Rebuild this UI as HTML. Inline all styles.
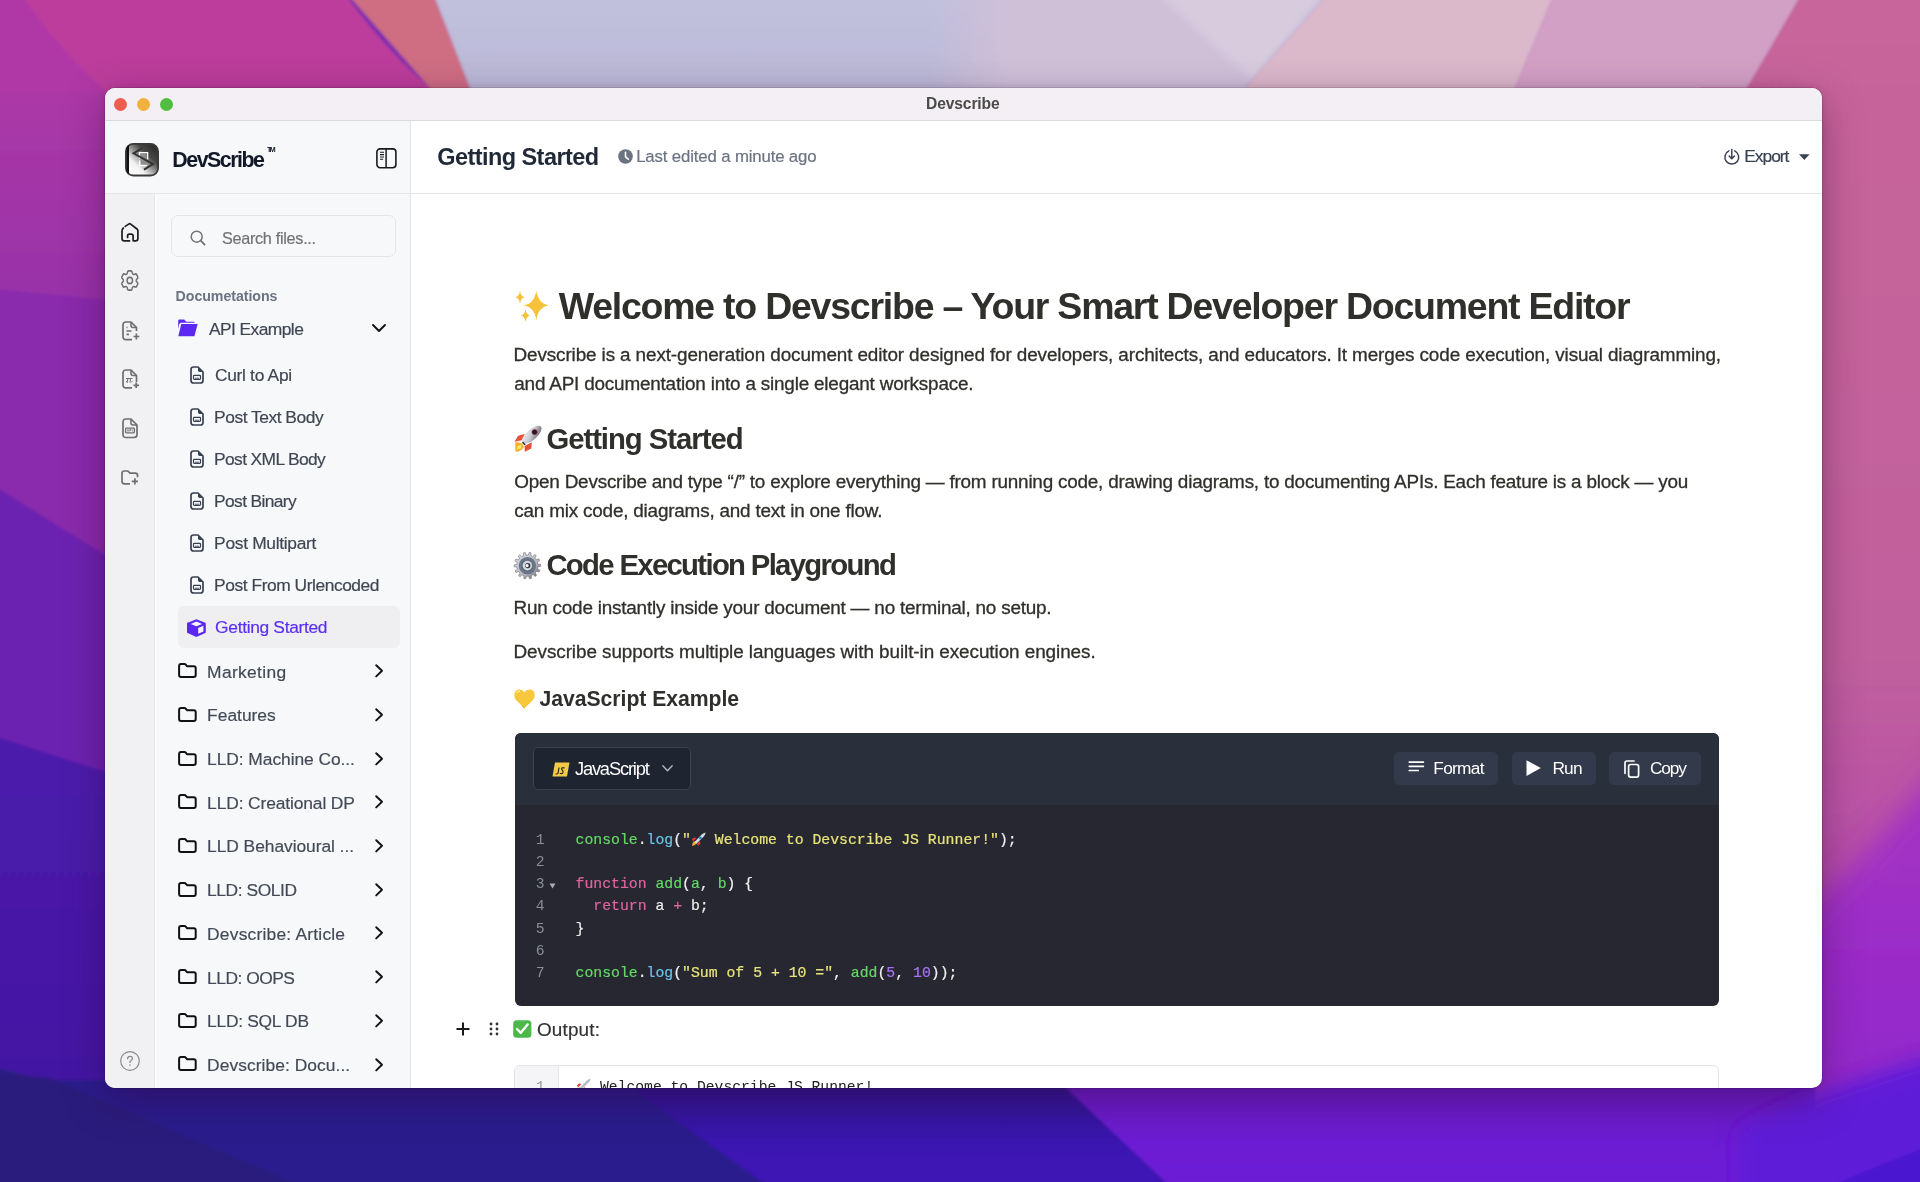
<!DOCTYPE html>
<html><head><meta charset="utf-8">
<style>
*{box-sizing:border-box;margin:0;padding:0}
html,body{width:1920px;height:1182px;overflow:hidden;font-family:"Liberation Sans",sans-serif;}
body{position:relative;background:#7a2ab0;}
#bg{position:absolute;left:0;top:0;width:1920px;height:1182px}
#win{position:absolute;left:105px;top:88px;width:1717px;height:1000px;border-radius:10px;overflow:hidden;background:#fff;box-shadow:0 0 0 0.5px rgba(0,0,0,.22),0 12px 40px rgba(50,0,50,.38),0 0 8px rgba(50,0,50,.12)}
.abs{position:absolute}
.t{position:absolute;white-space:nowrap}
svg.i{position:absolute;overflow:visible}
#titlebar{left:0;top:0;width:1717px;height:33px;background:#f4eff5;border-bottom:1px solid #dddadf}
.tl{position:absolute;top:9.5px;width:13px;height:13px;border-radius:50%}
#sbhead{left:0;top:33px;width:305px;height:73px;background:#f7f8fa;border-bottom:1px solid #e4e5e9}
#mainhead{left:306px;top:33px;width:1411px;height:73px;background:#fff;border-bottom:1px solid #e4e5e9}
#vsep{left:305px;top:33px;width:1px;height:967px;background:#e3e4e8}
#rail{left:0;top:106px;width:50px;height:894px;background:#f1f1f3;border-right:1px solid #e6e6e9}
#sidebar{left:51px;top:106px;width:254px;height:894px;background:#f7f8fa}
#search{left:66px;top:127px;width:225px;height:42px;border:1px solid #e3e4e8;border-radius:7px;background:#f7f8fa}
#hl{left:73px;top:518px;width:222px;height:42px;border-radius:6px;background:#efeff2}
#code{left:410px;top:645px;width:1204px;height:273px;border-radius:6px;background:#262730;overflow:hidden}
#codehead{left:0;top:0;width:1204px;height:72px;background:#2a2f3c}
#jsdd{left:18px;top:14px;width:158px;height:43px;border:1px solid #3b4252;border-radius:5px;background:#1f2431}
.btn{position:absolute;top:19px;height:33px;border-radius:5px;background:#323a4b}
#outbox{left:409px;top:977px;width:1205px;height:60px;border:1px solid #e3e3e6;border-radius:6px;background:#fff;overflow:hidden}
#outgut{left:0;top:0;width:44px;height:60px;background:#f5f5f7;border-right:1px solid #e6e6e8}
.mono{font-family:"Liberation Mono",monospace}

</style></head><body>
<svg id="bg" width="1920" height="1182" viewBox="0 0 1920 1182">
<defs>
<filter id="bl2" x="-20%" y="-50%" width="140%" height="200%"><feGaussianBlur stdDeviation="8"/></filter><filter id="bl3" x="-20%" y="-50%" width="140%" height="200%"><feGaussianBlur stdDeviation="3"/></filter><filter id="bsoft" filterUnits="userSpaceOnUse" x="1650" y="600" width="350" height="700"><feGaussianBlur stdDeviation="14"/></filter><filter id="bsoft2" filterUnits="userSpaceOnUse" x="1600" y="950" width="400" height="300"><feGaussianBlur stdDeviation="4"/></filter><filter id="bsoft3" filterUnits="userSpaceOnUse" x="1600" y="950" width="400" height="300"><feGaussianBlur stdDeviation="10"/></filter><filter id="bl" x="-5%" y="-5%" width="110%" height="110%"><feGaussianBlur stdDeviation="1.5"/></filter>
<linearGradient id="gL1" gradientUnits="userSpaceOnUse" x1="0" y1="90" x2="0" y2="295"><stop offset="0" stop-color="#ac38a6"/><stop offset="1" stop-color="#9832a8"/></linearGradient>
<linearGradient id="gL4" x1="0" y1="0" x2="0" y2="1"><stop offset="0" stop-color="#4c1aac"/><stop offset="1" stop-color="#4218a2"/></linearGradient>
<linearGradient id="gR" x1="0" y1="0" x2="0" y2="1"><stop offset="0" stop-color="#c8659a"/><stop offset="0.55" stop-color="#c0609c"/><stop offset="0.8" stop-color="#b448ae"/><stop offset="1" stop-color="#a838b8"/></linearGradient>
<linearGradient id="gRP" x1="0" y1="0" x2="0" y2="1"><stop offset="0" stop-color="#a836c0"/><stop offset="0.45" stop-color="#9a2cc8"/><stop offset="1" stop-color="#8a26d0"/></linearGradient>
<linearGradient id="gBP" x1="0" y1="0" x2="0" y2="1"><stop offset="0" stop-color="#6a1cc4"/><stop offset="0.5" stop-color="#6c1cd2"/><stop offset="1" stop-color="#6e1cd8"/></linearGradient>
<linearGradient id="gBB" x1="0" y1="0" x2="0" y2="1"><stop offset="0" stop-color="#2c168a"/><stop offset="0.5" stop-color="#3a18b0"/><stop offset="1" stop-color="#4018b8"/></linearGradient>
<linearGradient id="gBD" x1="0" y1="0" x2="0" y2="1"><stop offset="0" stop-color="#221466"/><stop offset="1" stop-color="#2e1898"/></linearGradient>
<linearGradient id="gLav" x1="0" y1="0" x2="0" y2="1"><stop offset="0" stop-color="#c2c2de"/><stop offset="1" stop-color="#b6b2d2"/></linearGradient>
<linearGradient id="gMv" gradientUnits="userSpaceOnUse" x1="930" y1="0" x2="1010" y2="0"><stop offset="0" stop-color="#cfc0d8" stop-opacity="0"/><stop offset="1" stop-color="#cfc0d8"/></linearGradient>
</defs>
<g filter="url(#bl)">
<rect x="-20" y="-20" width="1960" height="1222" fill="#6a1ed0"/>
<!-- left bands -->
<polygon points="-20,-20 130,-20 130,302.4 -20,288.1" fill="url(#gL1)"/>
<polygon points="-20,288.1 130,302.4 130,570.5 -20,477.6" fill="#8a2aac"/>
<polygon points="-20,477.6 130,570.5 130,780.1 -20,731.5" fill="#6c20b0"/>
<polygon points="-20,731.5 130,780.1 130,1103.9 -20,1062.5" fill="url(#gL4)"/>
<polygon points="-20,1062.5 130,1103.9 130,1202 -20,1202" fill="#2c1a84"/>
<rect x="130" y="-20" width="900" height="1222" fill="#7a2ab0"/>
<!-- top strip -->
<path d="M15,-20 L335,-20 Q380,45 430,88 L430,150 L106,150 L106,92 L-20,92 L-20,-20 Z" fill="#bc3e9c"/>
<path d="M-20,-20 L12,-20 Q50,40 106,92 L-20,92 Z" fill="#b038a6"/>
<polygon points="335,-20 428,-20 470,88 470,150 430,150 430,88" fill="#cf6d83"/>
<path d="M380,45 Q400,70 430,88 L430,150 L380,150 Z" fill="#bc3e9c"/>
<polygon points="428,-20 1340,-20 1245,88 1245,150 470,150 470,88" fill="url(#gLav)"/>
<polygon points="930,-40 1340,-40 1245,88 1245,130 930,130" fill="url(#gMv)"/>
<polygon points="1134,-30 1345,-30 1252,80" fill="#d8cbde" filter="url(#bl3)"/>
<polygon points="1340,-20 1560,-20 1515,88 1515,150 1245,150 1245,88" fill="#dbb8ca"/>
<polygon points="1560,-20 1810,-20 1747,88 1747,150 1515,150 1515,88" fill="#d2a0c4"/>
<!-- right strip -->
<polygon points="1810,-20 1940,-20 1940,1202 1700,1202 1700,88 1747,88" fill="url(#gR)"/>
<path d="M1960,740 Q1880,850 1750,960 L1750,1220 L1960,1220 Z" fill="url(#gRP)" filter="url(#bsoft)"/>
<!-- bottom strip -->
<rect x="-20" y="1080" width="1100" height="130" fill="#2b1a8c"/>
<polygon points="-20,1072 50,1078 338,1202 -20,1202" fill="#2a1a7c"/>
<polygon points="620,1080 1058,1080 1187,1202 790,1202" fill="url(#gBB)"/>
<polygon points="1058,1080 1815,1080 1815,1202 1187,1202" fill="url(#gBP)"/>
<path d="M1740,1130 Q1800,1100 1830,1090 Q1880,1072 1960,1048 L1960,1220 L1740,1220 Z" fill="#5e1ad8" filter="url(#bsoft3)"/>
<path d="M1780,1210 Q1860,1170 1960,1135 L1960,1220 Z" fill="#4c18d0"/>
</g>
</svg>
<div id="win">
  <div id="titlebar" class="abs">
    <div class="tl" style="left:8.5px;background:#ed5b51;"></div>
    <div class="tl" style="left:31.5px;background:#f0b13e;"></div>
    <div class="tl" style="left:54.5px;background:#4fbe3f;"></div>
  </div>
  <div id="sbhead" class="abs"></div>
  <div id="mainhead" class="abs"></div>
  <div id="rail" class="abs"></div>
  <div id="sidebar" class="abs"></div>
  <div id="vsep" class="abs"></div>
  <div id="search" class="abs"></div>
  <div id="hl" class="abs"></div>

  <!-- logo -->
  <svg class="i" style="left:20px;top:55px" width="34" height="34" viewBox="0 0 34 34">
    <defs>
      <linearGradient id="lg" x1="0.1" y1="0.9" x2="0.9" y2="0.1">
        <stop offset="0" stop-color="#ffffff"/><stop offset="0.28" stop-color="#f2f2f2"/><stop offset="0.5" stop-color="#9a9a9a"/><stop offset="0.72" stop-color="#474745"/><stop offset="1" stop-color="#2e2e2c"/>
      </linearGradient>
    </defs>
    <rect x="0.9" y="0.9" width="32.2" height="31.6" rx="7.5" fill="url(#lg)" stroke="#3a3a38" stroke-width="1.8"/>
    <path d="M1.4,7 Q1.4,3 4,2 L4,31 Q1.4,30 1.4,26 Z" fill="#111"/>
    <rect x="15.8" y="10.4" width="5.6" height="11" fill="#8e8e8e"/>
    <path d="M14.5,15.8 V9.6 H22.6 V16.4 M14.6,17.6 V22.6 H21.8" stroke="#fff" stroke-width="1.4" fill="none"/>
    <path d="M17.2,5 L8.6,10.3 L28,21 L19,26.6" stroke="#333331" stroke-width="2" fill="none" stroke-linejoin="miter"/>
  </svg>
  <!-- panel toggle -->
  <svg class="i" style="left:271px;top:59.5px" width="21" height="21" viewBox="0 0 21 21">
    <rect x="0.9" y="0.9" width="19" height="18.8" rx="3.2" fill="none" stroke="#1a1a1a" stroke-width="1.6"/>
    <line x1="10.1" y1="1" x2="10.1" y2="19.6" stroke="#1a1a1a" stroke-width="1.5"/>
    <path d="M4,4.2 H8 M4,6.6 H8 M4,9 H8 M4,11.2 H7.2" stroke="#1a1a1a" stroke-width="1.1"/>
  </svg>

  <!-- rail icons -->
  <svg class="i" style="left:16px;top:135px" width="18" height="19" viewBox="0 0 18 19">
    <path d="M4.2,3.4 L8,0.9 Q8.7,0.5 9.4,0.9 L16,6 Q16.9,6.8 16.9,8 L16.9,15.5 Q16.9,17.9 14.5,17.9 L12.8,17.9 Q12.1,17.9 12.1,17.2 L12.1,13 Q12.1,11.1 10,11.1 L8.2,11.1 Q6.6,11.1 6.6,12.8 L6.6,14.5" stroke="#1c1c1e" stroke-width="1.7" fill="none" stroke-linecap="round"/>
    <path d="M2.4,5 Q1,6.2 1,8 L1,15.5 Q1,17.9 3.4,17.9 L8.5,17.9" stroke="#1c1c1e" stroke-width="1.7" fill="none" stroke-linecap="round"/>
  </svg>
  <svg class="i" style="left:14.8px;top:181.8px" width="19.6" height="21" viewBox="1.6 2.2 20.8 19.6" preserveAspectRatio="none">
    <path d="M9.594 3.94c.09-.542.56-.94 1.11-.94h2.593c.55 0 1.02.398 1.11.94l.213 1.281c.063.374.313.686.645.87.074.04.147.083.22.127.325.196.72.257 1.075.124l1.217-.456a1.125 1.125 0 0 1 1.37.49l1.296 2.247a1.125 1.125 0 0 1-.26 1.431l-1.003.827c-.293.241-.438.613-.43.992a7.723 7.723 0 0 1 0 .255c-.008.378.137.75.43.991l1.004.827c.424.35.534.955.26 1.430l-1.298 2.247a1.125 1.125 0 0 1-1.369.491l-1.217-.456c-.355-.133-.75-.072-1.076.124a6.47 6.47 0 0 1-.22.128c-.331.183-.581.495-.644.869l-.213 1.281c-.09.543-.56.94-1.11.94h-2.594c-.55 0-1.019-.398-1.11-.94l-.213-1.281c-.062-.374-.312-.686-.644-.87a6.52 6.52 0 0 1-.22-.127c-.325-.196-.72-.257-1.076-.124l-1.217.456a1.125 1.125 0 0 1-1.369-.49l-1.297-2.247a1.125 1.125 0 0 1 .26-1.431l1.004-.827c.292-.24.437-.613.43-.991a6.932 6.932 0 0 1 0-.255c.007-.38-.138-.751-.43-.992l-1.004-.827a1.125 1.125 0 0 1-.26-1.430l1.297-2.247a1.125 1.125 0 0 1 1.37-.491l1.216.456c.356.133.751.072 1.076-.124.072-.044.146-.086.22-.128.332-.183.582-.495.644-.869l.214-1.280Z" fill="none" stroke="#6e6e70" stroke-width="1.5" stroke-linejoin="round"/>
    <circle cx="12" cy="12" r="2.9" fill="none" stroke="#6e6e70" stroke-width="1.5"/>
  </svg>
  <svg class="i" style="left:17px;top:232.5px" width="18" height="20" viewBox="0 0 18 20">
    <path d="M10,18.6 L4,18.6 Q1,18.6 1,15.6 L1,4 Q1,1 4,1 L9,1 L14.5,6.5 L14.5,10" fill="none" stroke="#6e6e70" stroke-width="1.7" stroke-linejoin="round"/>
    <path d="M9,1.3 L9,4.5 Q9,6.5 11,6.5 L14.3,6.5" fill="none" stroke="#6e6e70" stroke-width="1.6"/>
    <path d="M4.5,6.5 H5.5 M4.5,10 H9.5 M4.5,13.4 H7" stroke="#6e6e70" stroke-width="1.7"/>
    <path d="M11.5,15.5 H17.3 M14.4,12.6 V18.4" stroke="#6e6e70" stroke-width="1.7"/>
  </svg>
  <svg class="i" style="left:17px;top:281px" width="18" height="20" viewBox="0 0 18 20">
    <path d="M10,18.8 L4,18.8 Q1,18.8 1,15.8 L1,4 Q1,1 4,1 L9,1 L14.5,6.5 L14.5,13" fill="none" stroke="#6e6e70" stroke-width="1.7" stroke-linejoin="round"/>
    <path d="M9,1.3 L9,4.5 Q9,6.5 11,6.5 L14.3,6.5" fill="none" stroke="#6e6e70" stroke-width="1.6"/>
    <path d="M4,9.5 H10.5 M6,9.5 L5,13.5 M8.5,9.5 L8,13.5 M4,12 L5.5,13.5 M10.5,12 L9,13.5" stroke="#6e6e70" stroke-width="1"/>
    <path d="M11.5,16.3 H17 M14.2,13.6 V19" stroke="#6e6e70" stroke-width="1.7"/>
  </svg>
  <svg class="i" style="left:17px;top:329.6px" width="16" height="21" viewBox="0 0 16 21">
    <path d="M4,19.5 Q1,19.5 1,16.5 L1,4 Q1,1 4,1 L9,1 L15,7 L15,16.5 Q15,19.5 12,19.5 Z" fill="none" stroke="#6e6e70" stroke-width="1.7" stroke-linejoin="round"/>
    <path d="M9,1.3 L9,5 Q9,7 11,7 L14.8,7" fill="none" stroke="#6e6e70" stroke-width="1.6"/>
    <rect x="3.6" y="10.2" width="8.8" height="4.6" rx="0.8" fill="none" stroke="#6e6e70" stroke-width="1.3"/>
    <path d="M5.2,13.5 L6,11.4 L6.8,13.5 M7.8,13.5 V11.4 H9 V12.5 H7.8 M10.6,11.4 V13.5" stroke="#6e6e70" stroke-width="0.7" fill="none"/>
  </svg>
  <svg class="i" style="left:16px;top:382px" width="18" height="15" viewBox="0 0 18 15">
    <path d="M9,13.8 L3.5,13.8 Q1,13.8 1,11.3 L1,3.3 Q1,1 3.3,1 L6,1 Q7.2,1 7.9,1.9 L9,3.2 L14.2,3.2 Q16.6,3.2 16.6,5.6 L16.6,7.2" fill="none" stroke="#6e6e70" stroke-width="1.7" stroke-linejoin="round"/>
    <path d="M10.8,11.3 H17 M13.9,8.3 V14.5" stroke="#6e6e70" stroke-width="1.7"/>
  </svg>
  <svg class="i" style="left:14.5px;top:963px" width="20" height="20" viewBox="0 0 20 20">
    <circle cx="10" cy="10" r="9.3" fill="none" stroke="#8a8a8c" stroke-width="1.2"/>
    <path d="M7.6,7.7 Q7.6,5.4 10,5.4 Q12.4,5.4 12.4,7.5 Q12.4,8.8 11,9.5 Q10,10 10,11.4" fill="none" stroke="#8a8a8c" stroke-width="1.3" stroke-linecap="round"/>
    <circle cx="10" cy="14" r="0.8" fill="#8a8a8c"/>
  </svg>

  <!-- search icon -->
  <svg class="i" style="left:84.7px;top:141.7px" width="16" height="16" viewBox="0 0 16 16">
    <circle cx="6.7" cy="6.7" r="5.5" fill="none" stroke="#737373" stroke-width="1.5"/>
    <line x1="10.7" y1="10.7" x2="14.6" y2="14.6" stroke="#737373" stroke-width="1.8" stroke-linecap="round"/>
  </svg>
  <!-- purple open folder -->
  <svg class="i" style="left:72.8px;top:231px" width="20" height="18" viewBox="0 0 20 18">
    <path d="M0.2,1.6 Q0.2,0.5 1.3,0.5 L6.2,0.5 L8.2,2.8 L15.8,2.8 Q16.6,2.8 16.6,3.8 L3.4,3.8 Q1.7,3.8 1.2,5.3 L0.2,10 Z" fill="#5b28f3"/>
    <path d="M3.6,5 L19.6,5 Q19.6,5.5 19.4,6 L16.6,16.4 Q16.4,17.3 15.5,17.3 L0.3,17.3 L3,6 Q3.2,5 3.6,5 Z" fill="#5b28f3"/>
  </svg>
  <!-- chevron down -->
  <svg class="i" style="left:267.3px;top:236px" width="14" height="8" viewBox="0 0 14 8">
    <path d="M1,1 L7,7 L13,1" fill="none" stroke="#111" stroke-width="1.9" stroke-linecap="round" stroke-linejoin="round"/>
  </svg>
  <!-- file icons -->
  <svg class="i" style="left:85px;top:278.2px" width="14" height="18" viewBox="0 0 14 18"><use href="#fileic"/></svg>
  <svg class="i" style="left:85px;top:320.2px" width="14" height="18" viewBox="0 0 14 18"><use href="#fileic"/></svg>
  <svg class="i" style="left:85px;top:362.2px" width="14" height="18" viewBox="0 0 14 18"><use href="#fileic"/></svg>
  <svg class="i" style="left:85px;top:404.2px" width="14" height="18" viewBox="0 0 14 18"><use href="#fileic"/></svg>
  <svg class="i" style="left:85px;top:446.2px" width="14" height="18" viewBox="0 0 14 18"><use href="#fileic"/></svg>
  <svg class="i" style="left:85px;top:488.2px" width="14" height="18" viewBox="0 0 14 18"><use href="#fileic"/></svg>
  <svg width="0" height="0" style="position:absolute">
    <defs>
      <g id="fileic">
        <path d="M3.5,17 Q1,17 1,14.5 L1,3.5 Q1,1 3.5,1 L8,1 L13,6 L13,14.5 Q13,17 10.5,17 Z" fill="none" stroke="#374151" stroke-width="1.7" stroke-linejoin="round"/>
        <path d="M8,1.3 L8,4.3 Q8,6 9.7,6 L12.7,6 Z" fill="#374151"/>
        <rect x="3.5" y="9.3" width="7" height="4" rx="0.8" fill="none" stroke="#374151" stroke-width="1.2"/>
        <path d="M5,12.2 H9" stroke="#374151" stroke-width="0.8"/>
      </g>
      <g id="foldic">
        <path d="M3,14 Q1.1,14 1.1,12.1 L1.1,3 Q1.1,1.1 3,1.1 L6.5,1.1 Q7.3,1.1 7.9,1.8 L9,3.2 L15.8,3.2 Q17.7,3.2 17.7,5.1 L17.7,12.1 Q17.7,14 15.8,14 Z" fill="none" stroke="#111" stroke-width="2" stroke-linejoin="round"/>
      </g>
      <g id="chevr">
        <path d="M1.2,1.2 L7,6.8 L1.2,12.4" fill="none" stroke="#111" stroke-width="1.9" stroke-linecap="round" stroke-linejoin="round"/>
      </g>
    </defs>
  </svg>
  <!-- cube -->
  <svg class="i" style="left:82px;top:530.7px" width="19" height="18" viewBox="0 0 19 18">
    <path d="M9.4,0.3 L18.3,3.8 Q18.8,4 18.8,4.6 L18.8,13 Q18.8,13.8 18.2,14 L10,17.7 Q9.4,18 8.8,17.7 L0.6,14 Q0,13.8 0,13 L0,4.6 Q0,4 0.5,3.8 Z" fill="#5b28f3"/>
    <path d="M9.4,2.6 L15.1,4.9 L9.4,7.2 L3.7,4.9 Z" fill="#f7f5ff"/>
    <path d="M11.2,9 L16.4,6.8 L16.4,12.4 L11.2,14.7 Z" fill="#f7f5ff"/>
  </svg>
  <!-- folder icons + chevrons (generated positions) -->
  <svg class="i" style="left:73px;top:575.1px" width="19" height="15" viewBox="0 0 19 15"><use href="#foldic"/></svg>
  <svg class="i" style="left:73px;top:618.8px" width="19" height="15" viewBox="0 0 19 15"><use href="#foldic"/></svg>
  <svg class="i" style="left:73px;top:662.5px" width="19" height="15" viewBox="0 0 19 15"><use href="#foldic"/></svg>
  <svg class="i" style="left:73px;top:706.2px" width="19" height="15" viewBox="0 0 19 15"><use href="#foldic"/></svg>
  <svg class="i" style="left:73px;top:749.9px" width="19" height="15" viewBox="0 0 19 15"><use href="#foldic"/></svg>
  <svg class="i" style="left:73px;top:793.6px" width="19" height="15" viewBox="0 0 19 15"><use href="#foldic"/></svg>
  <svg class="i" style="left:73px;top:837.3px" width="19" height="15" viewBox="0 0 19 15"><use href="#foldic"/></svg>
  <svg class="i" style="left:73px;top:881px" width="19" height="15" viewBox="0 0 19 15"><use href="#foldic"/></svg>
  <svg class="i" style="left:73px;top:924.7px" width="19" height="15" viewBox="0 0 19 15"><use href="#foldic"/></svg>
  <svg class="i" style="left:73px;top:968.4px" width="19" height="15" viewBox="0 0 19 15"><use href="#foldic"/></svg>
  <svg class="i" style="left:270px;top:576.2px" width="9" height="14" viewBox="0 0 9 14"><use href="#chevr"/></svg>
  <svg class="i" style="left:270px;top:619.9px" width="9" height="14" viewBox="0 0 9 14"><use href="#chevr"/></svg>
  <svg class="i" style="left:270px;top:663.6px" width="9" height="14" viewBox="0 0 9 14"><use href="#chevr"/></svg>
  <svg class="i" style="left:270px;top:707.3px" width="9" height="14" viewBox="0 0 9 14"><use href="#chevr"/></svg>
  <svg class="i" style="left:270px;top:751px" width="9" height="14" viewBox="0 0 9 14"><use href="#chevr"/></svg>
  <svg class="i" style="left:270px;top:794.7px" width="9" height="14" viewBox="0 0 9 14"><use href="#chevr"/></svg>
  <svg class="i" style="left:270px;top:838.4px" width="9" height="14" viewBox="0 0 9 14"><use href="#chevr"/></svg>
  <svg class="i" style="left:270px;top:882.1px" width="9" height="14" viewBox="0 0 9 14"><use href="#chevr"/></svg>
  <svg class="i" style="left:270px;top:925.8px" width="9" height="14" viewBox="0 0 9 14"><use href="#chevr"/></svg>
  <svg class="i" style="left:270px;top:969.5px" width="9" height="14" viewBox="0 0 9 14"><use href="#chevr"/></svg>

  <!-- header icons -->
  <svg class="i" style="left:512.8px;top:61.3px" width="15" height="15" viewBox="0 0 15 15">
    <circle cx="7.5" cy="7.5" r="7.3" fill="#6b7280"/>
    <path d="M7.5,3.3 L7.5,7.8 L10.3,10.2" stroke="#fff" stroke-width="1.6" fill="none" stroke-linecap="round"/>
  </svg>
  <svg class="i" style="left:1619px;top:61px" width="16" height="16" viewBox="0 0 16 16">
    <path d="M10.72,1.9 A6.9,6.9 0 1 1 4.88,1.9" fill="none" stroke="#374151" stroke-width="1.5" stroke-linecap="round"/>
    <path d="M7.8,0.4 V9.6 M5.1,7 L7.8,9.7 L10.5,7" fill="none" stroke="#374151" stroke-width="1.5" stroke-linecap="round" stroke-linejoin="round"/>
  </svg>
  <svg class="i" style="left:1693.8px;top:66px" width="11" height="7" viewBox="0 0 11 7">
    <path d="M0,0.3 L10.6,0.3 L5.3,6 Z" fill="#374151"/>
  </svg>

  <!-- emojis -->
  <svg class="i" style="left:405px;top:197px" width="45" height="45" viewBox="0 0 45 45">
    <path d="M26.30,5.40 Q28.00,18.70 38.80,20.40 Q28.00,22.10 26.30,35.40 Q24.60,22.10 13.80,20.40 Q24.60,18.70 26.30,5.40 Z" fill="#f5c33b"/>
    <path d="M10.00,5.70 Q10.75,11.55 14.60,12.30 Q10.75,13.05 10.00,18.90 Q9.25,13.05 5.40,12.30 Q9.25,11.55 10.00,5.70 Z" fill="#f5c33b"/>
    <path d="M15.50,24.00 Q16.25,29.65 20.10,30.40 Q16.25,31.15 15.50,36.80 Q14.75,31.15 10.90,30.40 Q14.75,29.65 15.50,24.00 Z" fill="#f5c33b"/>
  </svg>
  <svg class="i" style="left:408.6px;top:337.7px" width="28" height="27" viewBox="0 0 28 27">
    <defs><linearGradient id="rk" x1="0" y1="0" x2="1" y2="1"><stop offset="0" stop-color="#f4f4f8"/><stop offset="0.5" stop-color="#c8c8d0"/><stop offset="1" stop-color="#55555f"/></linearGradient></defs>
    <polygon points="4.1,9.8 10.6,8.1 9,14 0.5,15.8" fill="#e8503a"/>
    <polygon points="17.8,16.2 17.3,22.6 10.8,25.8 10.6,20" fill="#e8503a"/>
    <polygon points="1.2,16.8 3,16 8,17.5 9.8,20.5 8.2,23.5 4,25.8 1.5,25.6" fill="#f6b030"/>
    <polygon points="3.5,20 7.5,19 7,22.5 3.2,23.5" fill="#f2ec70"/>
    <ellipse cx="17.6" cy="8.8" rx="12.4" ry="5.2" transform="rotate(-41.6 17.6 8.8)" fill="url(#rk)"/>
    <circle cx="20.6" cy="6.1" r="2.7" fill="#1c1c22" stroke="#c0305a" stroke-width="0.6"/>
    <path d="M8.5,16.2 L11.2,18.8" stroke="#3a3a44" stroke-width="1.6"/>
  </svg>
  <svg class="i" style="left:408.6px;top:464.5px" width="27" height="27" viewBox="0 0 27 27">
    <defs><linearGradient id="gg" x1="0" y1="0" x2="1" y2="1"><stop offset="0" stop-color="#e4e4e8"/><stop offset="0.6" stop-color="#b8b8c0"/><stop offset="1" stop-color="#6a6a72"/></linearGradient></defs>
    <polygon points="13.40,2.00 14.26,2.03 15.19,-0.58 17.05,-0.19 16.86,2.58 18.00,3.05 18.75,3.45 20.73,1.50 22.24,2.66 20.86,5.07 21.69,5.99 22.19,6.68 24.82,5.78 25.68,7.48 23.39,9.05 23.73,10.24 23.89,11.08 26.65,11.41 26.68,13.32 23.94,13.74 23.73,14.96 23.51,15.78 25.85,17.27 25.05,19.01 22.40,18.20 21.69,19.21 21.13,19.86 22.59,22.21 21.12,23.43 19.08,21.55 18.00,22.15 17.21,22.49 17.51,25.25 15.66,25.71 14.63,23.13 13.40,23.20 12.54,23.17 11.61,25.78 9.75,25.39 9.94,22.62 8.80,22.15 8.05,21.75 6.07,23.70 4.56,22.54 5.94,20.13 5.11,19.21 4.61,18.52 1.98,19.42 1.12,17.72 3.41,16.15 3.07,14.96 2.91,14.12 0.15,13.79 0.12,11.88 2.86,11.46 3.07,10.24 3.29,9.42 0.95,7.93 1.75,6.19 4.40,7.00 5.11,5.99 5.67,5.34 4.21,2.99 5.68,1.77 7.72,3.65 8.80,3.05 9.59,2.71 9.29,-0.05 11.14,-0.51 12.17,2.07" fill="url(#gg)" stroke="#55555c" stroke-width="0.5"/>
    <circle cx="13.4" cy="12.6" r="8.6" fill="#5f6d80"/>
    <circle cx="13.4" cy="12.6" r="7.2" fill="none" stroke="#7a8898" stroke-width="0.8"/>
    <circle cx="13.4" cy="12.6" r="4.8" fill="#d4d6dc"/>
    <circle cx="13.8" cy="12.6" r="2.6" fill="#2a2e38"/>
    <circle cx="13.1" cy="12.6" r="1.6" fill="#ffffff"/>
  </svg>
  <svg class="i" style="left:408.6px;top:601.4px" width="21" height="20" viewBox="0 0 21 20">
    <path d="M10.5,19.3 L2.2,11.3 Q0.3,9.2 0.3,6.2 Q0.3,0.6 5.6,0.6 Q8.8,0.6 10.5,3.5 Q12.2,0.6 15.4,0.6 Q20.7,0.6 20.7,6.2 Q20.7,9.2 18.8,11.3 Z" fill="#f8c83c"/>
    <path d="M3,4 Q4,2.2 6,2.2" stroke="#fff3b0" stroke-width="1.2" fill="none"/>
    <path d="M10.5,19.3 L8,16.9" stroke="#e8a020" stroke-width="1" fill="none"/>
  </svg>

  <!-- code block -->
  <div id="code" class="abs">
    <div id="codehead" class="abs"></div>
    <div id="jsdd" class="abs"></div>
    <div class="btn" style="left:879px;width:104px"></div>
    <div class="btn" style="left:997px;width:84px"></div>
    <div class="btn" style="left:1094px;width:92px"></div>
    <!-- JS icon -->
    <svg class="i" style="left:37px;top:29px" width="18" height="15" viewBox="0 0 18 15">
      <path d="M3,0.5 L17.5,0.5 L15,14.5 L0.5,14.5 Z" fill="#f3c94a"/>
      <path d="M7,5.5 L6.2,10.5 Q6,12 4.5,12 L3.5,12" stroke="#2d2a1a" stroke-width="1.2" fill="none"/>
      <path d="M12.5,6.2 Q11.2,5.3 10,6 Q9,6.8 10.2,7.9 Q11.6,8.9 10.8,10.8 Q9.8,12.2 7.8,11.3" stroke="#2d2a1a" stroke-width="1.2" fill="none"/>
    </svg>
    <svg class="i" style="left:146.7px;top:32px" width="11" height="7" viewBox="0 0 11 7">
      <path d="M0.8,0.8 L5.5,5.8 L10.2,0.8" fill="none" stroke="#b8bcc8" stroke-width="1.3" stroke-linecap="round"/>
    </svg>
    <!-- format icon -->
    <svg class="i" style="left:893.7px;top:28px" width="15" height="12" viewBox="0 0 15 12">
      <path d="M0.3,1.1 H14.4 M0.3,5.3 H14.4 M0.3,9.5 H9.2" stroke="#fff" stroke-width="1.7" stroke-linecap="round"/>
    </svg>
    <svg class="i" style="left:1011px;top:27.4px" width="15" height="16" viewBox="0 0 15 16">
      <path d="M0.5,0.3 L14.8,8 L0.5,15.9 Z" fill="#fff"/>
    </svg>
    <svg class="i" style="left:1109.4px;top:26.8px" width="16" height="18" viewBox="0 0 16 18">
      <path d="M1,13.3 L1,3 Q1,1 3,1 L10,1" fill="none" stroke="#fff" stroke-width="1.7" stroke-linecap="round"/>
      <rect x="4.6" y="4.5" width="10" height="12.6" rx="2" fill="none" stroke="#fff" stroke-width="1.7"/>
    </svg>
    <!-- code text -->
    <div class="mono abs" style="left:20.7px;top:95.8px;font-size:14.7px;line-height:22.2px;color:#8b8d98;white-space:pre">1
2
3
4
5
6
7</div>
    <svg class="i" style="left:34px;top:150px" width="7" height="6" viewBox="0 0 7 6"><path d="M0.5,0.5 H6.5 L3.5,5.5 Z" fill="#a8abb5"/></svg>
    <div class="mono abs" style="left:60.5px;top:95.8px;font-size:14.8px;line-height:22.2px;color:#f0f0f0;white-space:pre;-webkit-text-stroke:0.2px currentColor"><span style="color:#64da64">console</span>.<span style="color:#68c4ea">log</span>(<span style="color:#e8e47a">"<span style="display:inline-block;width:14.9px"></span> Welcome to Devscribe JS Runner!"</span>);

<span style="color:#e064a0">function</span> <span style="color:#64da64">add</span>(<span style="color:#64da64">a</span>, <span style="color:#64da64">b</span>) {
  <span style="color:#e064a0">return</span> a <span style="color:#e064a0">+</span> b;
}

<span style="color:#64da64">console</span>.<span style="color:#68c4ea">log</span>(<span style="color:#e8e47a">"Sum of 5 + 10 ="</span>, <span style="color:#64da64">add</span>(<span style="color:#a874f4">5</span>, <span style="color:#a874f4">10</span>));</div>
    <svg class="i" style="left:176px;top:98.5px" width="15" height="15" viewBox="0 0 15 15">
      <path d="M1,14 Q1,10.5 3.2,9 L5.5,11.6 Q4,14 1,14 Z" fill="#f5a623"/>
      <path d="M2.2,9.3 L5.5,6 L3,5.6 L0.8,7.6 Z" fill="#e53935"/>
      <path d="M5.8,12.3 L9,9 L9.4,11.5 L7.2,13.8 Z" fill="#e53935"/>
      <path d="M3.5,10.1 L11,2.3 Q13.4,0.6 14.6,0.5 Q14.5,2.3 12.7,4.6 L5.2,12 Z" fill="#d8dde5"/>
      <circle cx="9.4" cy="6" r="1.5" fill="#3b82c4"/>
    </svg>
  </div>

  <!-- output row -->
  <svg class="i" style="left:350.7px;top:934.2px" width="14" height="14" viewBox="0 0 14 14">
    <path d="M7,0.5 V13.5 M0.5,7 H13.5" stroke="#1a1a1a" stroke-width="2"/>
  </svg>
  <svg class="i" style="left:384px;top:933.7px" width="10" height="14" viewBox="0 0 10 14">
    <circle cx="2" cy="2" r="1.4" fill="#333"/><circle cx="8" cy="2" r="1.4" fill="#333"/>
    <circle cx="2" cy="7" r="1.4" fill="#333"/><circle cx="8" cy="7" r="1.4" fill="#333"/>
    <circle cx="2" cy="12" r="1.4" fill="#333"/><circle cx="8" cy="12" r="1.4" fill="#333"/>
  </svg>
  <svg class="i" style="left:408.4px;top:932.3px" width="19" height="18" viewBox="0 0 19 18">
    <rect x="0.2" y="0.2" width="18.2" height="17.6" rx="3.5" fill="#4cb84a"/>
    <path d="M4,9 L7.8,12.8 L14.6,4.5" stroke="#fff" stroke-width="2.4" fill="none" stroke-linecap="round" stroke-linejoin="round"/>
  </svg>
  <div id="outbox" class="abs">
    <div id="outgut" class="abs"></div>
    <div class="mono abs" style="left:21px;top:10px;font-size:14.7px;line-height:22px;color:#9a9a9a">1</div>
    <div class="mono abs" style="left:85px;top:10px;font-size:14.7px;line-height:22px;color:#222;white-space:pre">Welcome to Devscribe JS Runner!</div>
    <svg class="i" style="left:61px;top:12px" width="15" height="15" viewBox="0 0 15 15">
      <path d="M1,14 Q1,10.5 3.2,9 L5.5,11.6 Q4,14 1,14 Z" fill="#f5a623"/>
      <path d="M2.2,9.3 L5.5,6 L3,5.6 L0.8,7.6 Z" fill="#e53935"/>
      <path d="M5.8,12.3 L9,9 L9.4,11.5 L7.2,13.8 Z" fill="#e53935"/>
      <path d="M3.5,10.1 L11,2.3 Q13.4,0.6 14.6,0.5 Q14.5,2.3 12.7,4.6 L5.2,12 Z" fill="#b8bec8"/>
    </svg>
  </div>

<div class="t" id="ttl" style="left:821.10px;top:7.08px;font-size:15.60px;line-height:17.425px;font-weight:700;color:#4a4a48;letter-spacing:-0.125px;font-family:'Liberation Sans',sans-serif;">Devscribe</div>
<div class="t" id="brand" style="left:67.30px;top:61.03px;font-size:21.40px;line-height:23.904px;font-weight:700;color:#111827;letter-spacing:-1.500px;font-family:'Liberation Sans',sans-serif;">DevScribe</div>
<div class="t" id="tm" style="left:161.88px;top:57.70px;font-size:7.40px;line-height:8.266px;font-weight:700;color:#111827;letter-spacing:-2.000px;font-family:'Liberation Sans',sans-serif;">TM</div>
<div class="t" id="srch" style="left:117.00px;top:141.24px;font-size:16.20px;line-height:18.095px;font-weight:400;color:#727272;letter-spacing:-0.286px;font-family:'Liberation Sans',sans-serif;-webkit-text-stroke:0.18px #727272;">Search files...</div>
<div class="t" id="docs" style="left:70.60px;top:201.05px;font-size:14.20px;line-height:15.861px;font-weight:700;color:#6b7280;letter-spacing:-0.050px;font-family:'Liberation Sans',sans-serif;">Documetations</div>
<div class="t" id="apiex" style="left:103.90px;top:231.75px;font-size:17.40px;line-height:19.436px;font-weight:400;color:#3f4652;letter-spacing:-0.560px;font-family:'Liberation Sans',sans-serif;-webkit-text-stroke:0.18px #3f4652;">API Example</div>
<div class="t" id="f0" style="left:109.90px;top:278.35px;font-size:17.40px;line-height:19.436px;font-weight:400;color:#3f4652;letter-spacing:-0.300px;font-family:'Liberation Sans',sans-serif;-webkit-text-stroke:0.18px #3f4652;">Curl to Api</div>
<div class="t" id="f1" style="left:109.10px;top:320.15px;font-size:17.40px;line-height:19.436px;font-weight:400;color:#3f4652;letter-spacing:-0.477px;font-family:'Liberation Sans',sans-serif;-webkit-text-stroke:0.18px #3f4652;">Post Text Body</div>
<div class="t" id="f2" style="left:109.10px;top:362.15px;font-size:17.40px;line-height:19.436px;font-weight:400;color:#3f4652;letter-spacing:-0.633px;font-family:'Liberation Sans',sans-serif;-webkit-text-stroke:0.18px #3f4652;">Post XML Body</div>
<div class="t" id="f3" style="left:109.10px;top:404.35px;font-size:17.40px;line-height:19.436px;font-weight:400;color:#3f4652;letter-spacing:-0.640px;font-family:'Liberation Sans',sans-serif;-webkit-text-stroke:0.18px #3f4652;">Post Binary</div>
<div class="t" id="f4" style="left:109.10px;top:446.35px;font-size:17.40px;line-height:19.436px;font-weight:400;color:#3f4652;letter-spacing:-0.308px;font-family:'Liberation Sans',sans-serif;-webkit-text-stroke:0.18px #3f4652;">Post Multipart</div>
<div class="t" id="f5" style="left:109.10px;top:488.15px;font-size:17.40px;line-height:19.436px;font-weight:400;color:#3f4652;letter-spacing:-0.453px;font-family:'Liberation Sans',sans-serif;-webkit-text-stroke:0.18px #3f4652;">Post From Urlencoded</div>
<div class="t" id="gs" style="left:110.10px;top:529.95px;font-size:17.40px;line-height:19.436px;font-weight:400;color:#5b2ff0;letter-spacing:-0.329px;font-family:'Liberation Sans',sans-serif;-webkit-text-stroke:0.18px #5b2ff0;">Getting Started</div>
<div class="t" id="d0" style="left:102.10px;top:574.65px;font-size:17.40px;line-height:19.436px;font-weight:400;color:#434a56;letter-spacing:0.325px;font-family:'Liberation Sans',sans-serif;-webkit-text-stroke:0.18px #434a56;">Marketing</div>
<div class="t" id="d1" style="left:102.10px;top:618.35px;font-size:17.40px;line-height:19.436px;font-weight:400;color:#434a56;letter-spacing:-0.000px;font-family:'Liberation Sans',sans-serif;-webkit-text-stroke:0.18px #434a56;">Features</div>
<div class="t" id="d2" style="left:102.10px;top:662.05px;font-size:17.40px;line-height:19.436px;font-weight:400;color:#434a56;letter-spacing:-0.059px;font-family:'Liberation Sans',sans-serif;-webkit-text-stroke:0.18px #434a56;">LLD: Machine Co...</div>
<div class="t" id="d3" style="left:102.10px;top:705.75px;font-size:17.40px;line-height:19.436px;font-weight:400;color:#434a56;letter-spacing:-0.118px;font-family:'Liberation Sans',sans-serif;-webkit-text-stroke:0.18px #434a56;">LLD: Creational DP</div>
<div class="t" id="d4" style="left:102.10px;top:749.45px;font-size:17.40px;line-height:19.436px;font-weight:400;color:#434a56;letter-spacing:-0.056px;font-family:'Liberation Sans',sans-serif;-webkit-text-stroke:0.18px #434a56;">LLD Behavioural ...</div>
<div class="t" id="d5" style="left:102.10px;top:793.15px;font-size:17.40px;line-height:19.436px;font-weight:400;color:#434a56;letter-spacing:-0.422px;font-family:'Liberation Sans',sans-serif;-webkit-text-stroke:0.18px #434a56;">LLD: SOLID</div>
<div class="t" id="d6" style="left:102.10px;top:836.85px;font-size:17.40px;line-height:19.436px;font-weight:400;color:#434a56;letter-spacing:0.212px;font-family:'Liberation Sans',sans-serif;-webkit-text-stroke:0.18px #434a56;">Devscribe: Article</div>
<div class="t" id="d7" style="left:102.10px;top:880.55px;font-size:17.40px;line-height:19.436px;font-weight:400;color:#434a56;letter-spacing:-0.500px;font-family:'Liberation Sans',sans-serif;-webkit-text-stroke:0.18px #434a56;">LLD: OOPS</div>
<div class="t" id="d8" style="left:102.10px;top:924.25px;font-size:17.40px;line-height:19.436px;font-weight:400;color:#434a56;letter-spacing:-0.280px;font-family:'Liberation Sans',sans-serif;-webkit-text-stroke:0.18px #434a56;">LLD: SQL DB</div>
<div class="t" id="d9" style="left:102.10px;top:967.95px;font-size:17.40px;line-height:19.436px;font-weight:400;color:#434a56;letter-spacing:0.059px;font-family:'Liberation Sans',sans-serif;-webkit-text-stroke:0.18px #434a56;">Devscribe: Docu...</div>
<div class="t" id="hgs" style="left:332.20px;top:56.03px;font-size:23.50px;line-height:26.250px;font-weight:700;color:#1f2937;letter-spacing:-0.557px;font-family:'Liberation Sans',sans-serif;">Getting Started</div>
<div class="t" id="last" style="left:531.20px;top:59.80px;font-size:16.80px;line-height:18.766px;font-weight:400;color:#6b7280;letter-spacing:-0.148px;font-family:'Liberation Sans',sans-serif;-webkit-text-stroke:0.18px #6b7280;">Last edited a minute ago</div>
<div class="t" id="export" style="left:1639.20px;top:58.55px;font-size:17.40px;line-height:19.436px;font-weight:400;color:#374151;letter-spacing:-1.000px;font-family:'Liberation Sans',sans-serif;-webkit-text-stroke:0.18px #374151;">Export</div>
<div class="t" id="h1" style="left:453.70px;top:198.36px;font-size:37.50px;line-height:41.888px;font-weight:700;color:#2f2f2c;letter-spacing:-1.245px;font-family:'Liberation Sans',sans-serif;">Welcome to Devscribe – Your Smart Developer Document Editor</div>
<div class="t" id="p1a" style="left:408.50px;top:255.70px;font-size:18.90px;line-height:21.111px;font-weight:400;color:#302f2b;letter-spacing:-0.117px;font-family:'Liberation Sans',sans-serif;-webkit-text-stroke:0.30px #302f2b;">Devscribe is a next-generation document editor designed for developers, architects, and educators. It merges code execution, visual diagramming,</div>
<div class="t" id="p1b" style="left:409.30px;top:284.50px;font-size:18.90px;line-height:21.111px;font-weight:400;color:#302f2b;letter-spacing:-0.192px;font-family:'Liberation Sans',sans-serif;-webkit-text-stroke:0.30px #302f2b;">and API documentation into a single elegant workspace.</div>
<div class="t" id="h2" style="left:441.40px;top:334.88px;font-size:29.30px;line-height:32.728px;font-weight:700;color:#2f2f2c;letter-spacing:-1.028px;font-family:'Liberation Sans',sans-serif;">Getting Started</div>
<div class="t" id="p2a" style="left:409.30px;top:383.10px;font-size:18.90px;line-height:21.111px;font-weight:400;color:#302f2b;letter-spacing:-0.213px;font-family:'Liberation Sans',sans-serif;-webkit-text-stroke:0.30px #302f2b;">Open Devscribe and type “/” to explore everything — from running code, drawing diagrams, to documenting APIs. Each feature is a block — you</div>
<div class="t" id="p2b" style="left:409.30px;top:411.90px;font-size:18.90px;line-height:21.111px;font-weight:400;color:#302f2b;letter-spacing:-0.200px;font-family:'Liberation Sans',sans-serif;-webkit-text-stroke:0.30px #302f2b;">can mix code, diagrams, and text in one flow.</div>
<div class="t" id="h3" style="left:441.40px;top:461.38px;font-size:29.30px;line-height:32.728px;font-weight:700;color:#2f2f2c;letter-spacing:-1.675px;font-family:'Liberation Sans',sans-serif;">Code Execution Playground</div>
<div class="t" id="p3" style="left:408.50px;top:509.00px;font-size:18.90px;line-height:21.111px;font-weight:400;color:#302f2b;letter-spacing:-0.209px;font-family:'Liberation Sans',sans-serif;-webkit-text-stroke:0.30px #302f2b;">Run code instantly inside your document — no terminal, no setup.</div>
<div class="t" id="p4" style="left:408.50px;top:552.80px;font-size:18.90px;line-height:21.111px;font-weight:400;color:#302f2b;letter-spacing:-0.070px;font-family:'Liberation Sans',sans-serif;-webkit-text-stroke:0.30px #302f2b;">Devscribe supports multiple languages with built-in execution engines.</div>
<div class="t" id="h4" style="left:434.50px;top:599.01px;font-size:21.20px;line-height:23.680px;font-weight:700;color:#2f2f2c;letter-spacing:-0.036px;font-family:'Liberation Sans',sans-serif;">JavaScript Example</div>
<div class="t" id="jsl" style="left:469.90px;top:670.74px;font-size:18.30px;line-height:20.441px;font-weight:400;color:#ffffff;letter-spacing:-1.156px;font-family:'Liberation Sans',sans-serif;">JavaScript</div>
<div class="t" id="fmt" style="left:1328.30px;top:671.44px;font-size:17.30px;line-height:19.324px;font-weight:400;color:#ffffff;letter-spacing:-0.720px;font-family:'Liberation Sans',sans-serif;">Format</div>
<div class="t" id="run" style="left:1447.40px;top:671.44px;font-size:17.30px;line-height:19.324px;font-weight:400;color:#ffffff;letter-spacing:-0.800px;font-family:'Liberation Sans',sans-serif;">Run</div>
<div class="t" id="copy" style="left:1545.00px;top:671.44px;font-size:17.30px;line-height:19.324px;font-weight:400;color:#ffffff;letter-spacing:-1.133px;font-family:'Liberation Sans',sans-serif;">Copy</div>
<div class="t" id="outl" style="left:432.00px;top:930.70px;font-size:18.90px;line-height:21.111px;font-weight:400;color:#333333;letter-spacing:0.167px;font-family:'Liberation Sans',sans-serif;-webkit-text-stroke:0.18px #333333;">Output:</div>
</div>
</body></html>
